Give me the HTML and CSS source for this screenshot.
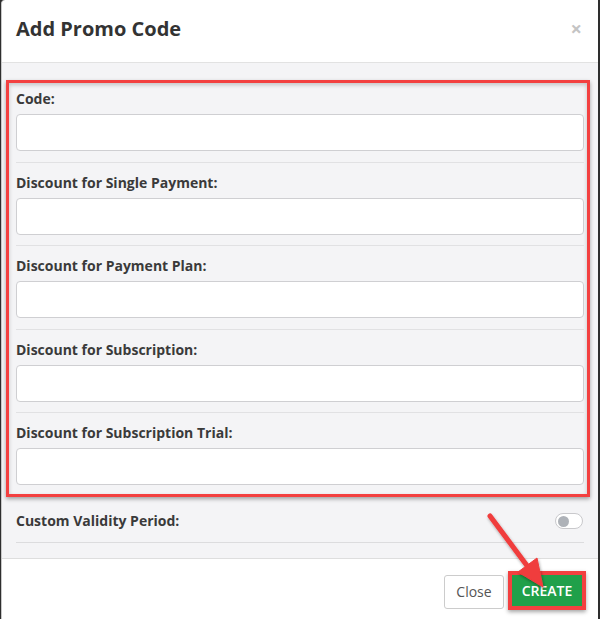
FILE: index.html
```html
<!DOCTYPE html>
<html>
<head>
<meta charset="utf-8">
<link rel="stylesheet" href="styles.css">
</head>
<body>
<div class="modal">
  <div class="modal-header">
    <h4 class="modal-title">Add Promo Code</h4>
    <span class="close">&times;</span>
  </div>
  <div class="modal-body">
    <div class="highlight">
      <div class="field">
        <label class="label">Code:</label>
        <div class="input"></div>
      </div>
      <div class="field">
        <label class="label">Discount for Single Payment:</label>
        <div class="input"></div>
      </div>
      <div class="field">
        <label class="label">Discount for Payment Plan:</label>
        <div class="input"></div>
      </div>
      <div class="field">
        <label class="label">Discount for Subscription:</label>
        <div class="input"></div>
      </div>
      <div class="field last">
        <label class="label">Discount for Subscription Trial:</label>
        <div class="input"></div>
      </div>
    </div>
    <div class="toggle-row">
      <label class="label">Custom Validity Period:</label>
      <span class="toggle"><span class="knob"></span></span>
    </div>
  </div>
  <div class="modal-footer">
    <button class="btn btn-close">Close</button>
    <span class="create-frame"><button class="btn btn-create">CREATE</button></span>
  </div>
  <svg class="arrow" width="120" height="110" viewBox="0 0 120 110">
    <defs>
      <filter id="sh" x="-20%" y="-20%" width="140%" height="140%">
        <feDropShadow dx="1" dy="2" stdDeviation="1.5" flood-color="#000" flood-opacity="0.35"/>
      </filter>
    </defs>
    <g filter="url(#sh)" fill="#f03c3c" stroke="#f03c3c">
      <line x1="20" y1="16" x2="61" y2="71" stroke-width="5" stroke-linecap="round"/>
      <polygon points="73,87 48,72 67,58" stroke-width="1" stroke-linejoin="round"/>
    </g>
  </svg>
</div>
</body>
</html>
```
FILE: styles.css
```css
html, body {
  margin: 0;
  padding: 0;
}
body {
  background: #2e2e2e;
  font-family: "Open Sans", "Liberation Sans", sans-serif;
  color: #333;
  width: 600px;
  height: 619px;
  overflow: hidden;
}
.modal {
  position: relative;
  margin-left: 1px;
  width: 597px;
  height: 619px;
  background: #fff;
  border-left: 1px solid #c8c8c8;
  border-top-left-radius: 4px;
  box-sizing: border-box;
  display: flex;
  flex-direction: column;
}
.modal-header {
  height: 63px;
  box-sizing: border-box;
  border-bottom: 1px solid #e2e2e2;
  display: flex;
  align-items: center;
  justify-content: space-between;
  padding: 0 14px 6px 14px;
}
.modal-title {
  margin: 0;
  font-size: 20px;
  font-weight: 700;
  color: #333;
}
.close {
  font-size: 20px;
  font-weight: 700;
  color: #c4c4c4;
  line-height: 1;
  margin-right: 2px;
  margin-top: 2px;
}
.modal-body {
  background: #f4f4f6;
  padding: 17px 14px 15px 14px;
  border-bottom: 1px solid #dedede;
}
.highlight {
  margin: 0 -6px 0 -10px;
  border: 3px solid #f34040;
  padding: 6px 3px 9px 7px;
  box-shadow: 0 2px 4px rgba(0,0,0,0.35), inset 0 2px 4px rgba(0,0,0,0.2);
}
.field {
  padding: 10px 0 10.5px 0;
  border-bottom: 1px solid #e1e1e3;
  display: flex;
  flex-direction: column;
  gap: 5px;
}
.field:first-child {
  padding-top: 0;
}
.field.last {
  border-bottom: none;
  padding-bottom: 0;
}
.label {
  font-size: 14px;
  font-weight: 700;
  line-height: 20px;
  color: #3a3a3a;
}
.input {
  height: 37px;
  box-sizing: border-box;
  background: #fff;
  border: 1px solid #cfcfd2;
  border-radius: 4px;
}
.toggle-row {
  margin-top: 14px;
  padding-bottom: 11px;
  border-bottom: 1px solid #dcdcde;
  display: flex;
  align-items: center;
  justify-content: space-between;
}
.toggle {
  width: 28px;
  height: 16px;
  box-sizing: border-box;
  border: 1px solid #c9c9cc;
  border-radius: 8px;
  background: #fff;
  display: flex;
  align-items: center;
  padding-left: 2px;
  margin-right: 1px;
}
.knob {
  width: 11px;
  height: 11px;
  border-radius: 50%;
  background: #aeb2b8;
}
.modal-footer {
  flex: 1;
  display: flex;
  justify-content: flex-end;
  align-items: flex-start;
  padding: 12px 12px 0 0;
  gap: 4px;
}
.btn {
  font-family: "Open Sans", "Liberation Sans", sans-serif;
  font-size: 14px;
  line-height: 20px;
  border-radius: 3px;
  cursor: pointer;
}
.btn-close {
  margin-top: 4px;
  height: 34px;
  width: 60px;
  background: #fff;
  border: 1px solid #cccccc;
  color: #555;
  padding: 0;
}
.create-frame {
  display: flex;
  border: 3px solid #f34040;
  padding: 1px;
  box-shadow: 0 2px 4px rgba(0,0,0,0.35);
  background: #f34040;
}
.btn-create {
  height: 31px;
  width: 70px;
  background: #20a04a;
  border: none;
  border-radius: 0;
  color: #fff;
  font-weight: 600;
  padding: 0;
}
.arrow {
  position: absolute;
  left: 468px;
  top: 500px;
}
```
